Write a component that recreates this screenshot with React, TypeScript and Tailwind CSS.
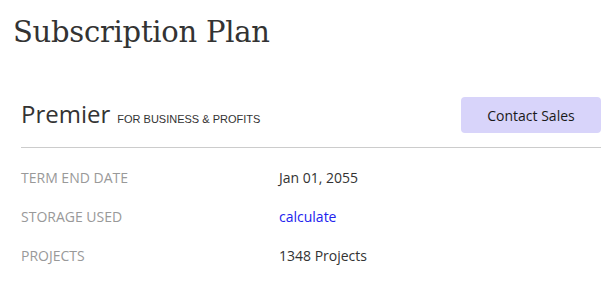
export default function App() {
  const rows = [
    { label: "TERM END DATE", value: "Jan 01, 2055", link: false },
    { label: "STORAGE USED", value: "calculate", link: true },
    { label: "PROJECTS", value: "1348 Projects", link: false },
  ];
  return (
    <div className="w-[612px] h-[293px] bg-white overflow-hidden">
      <h1 className="pl-[13px] pt-[12px] text-[29px] tracking-[-0.25px] leading-[40px] text-[#333] font-['DejaVu_Serif',serif]">
        Subscription Plan
      </h1>
      <div className="ml-[21px] mr-[11px] mt-[45px] font-['Open_Sans',sans-serif]">
        <div className="flex items-center justify-between h-[36px]">
          <div className="flex items-baseline">
            <span className="text-[24px] text-[#333] leading-none">Premier</span>
            <span className="ml-[7px] text-[11px] text-[#333] font-['Liberation_Sans',sans-serif]">
              FOR BUSINESS &amp; PROFITS
            </span>
          </div>
          <button className="w-[140px] h-[36px] rounded-[4px] bg-[#d8d4fa] text-[14px] text-[#1a1a1a]">
            Contact Sales
          </button>
        </div>
        <div className="mt-[14px] h-px bg-[#ccc]" />
        <div className="mt-[19px] flex flex-col gap-[19px]">
          {rows.map((r) => (
            <div key={r.label} className="flex h-[20px] items-center text-[14px]">
              <span className="w-[258px] text-[#999]">{r.label}</span>
              <span className={r.link ? "text-[#2222ee]" : "text-[#333]"}>{r.value}</span>
            </div>
          ))}
        </div>
      </div>
    </div>
  );
}
